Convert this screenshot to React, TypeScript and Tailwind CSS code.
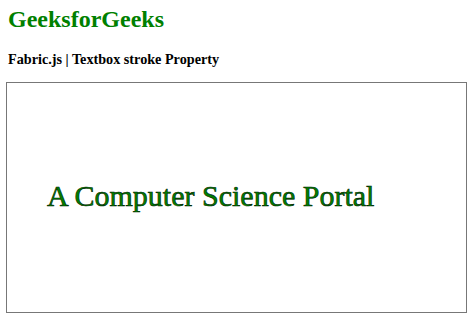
import React from "react";

const App = () => {
  return (
    <div className="w-[474px] h-[322px] bg-white font-['Liberation_Serif',serif] overflow-hidden">
      <div className="pl-2 pt-[5px]">
        <h1 className="text-[24px] leading-[28px] font-bold text-[#008000]">GeeksforGeeks</h1>
        <h3 className="mt-[18px] text-[14.2px] leading-[17px] font-bold text-black">
          Fabric.js | Textbox stroke Property
        </h3>
      </div>
      <div className="ml-[6px] mt-[14px] w-[461px] h-[231px] border border-[#777] pl-[40px] pt-[96px]">
        <span className="text-[30px] leading-[34px] text-[#008000] [-webkit-text-stroke:0.6px_#002200]">
          A Computer Science Portal
        </span>
      </div>
    </div>
  );
};

export default App;
